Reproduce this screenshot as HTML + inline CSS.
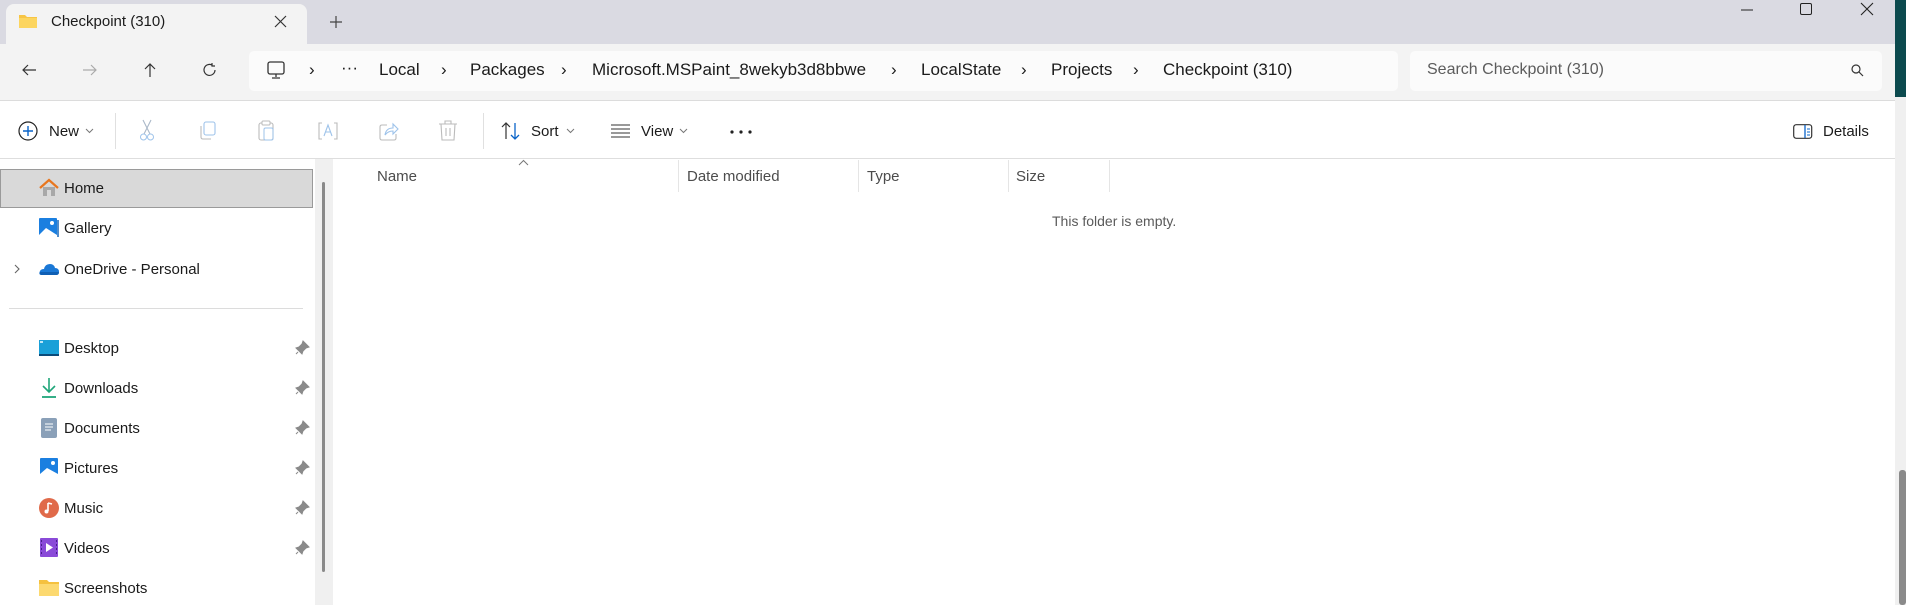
<!DOCTYPE html>
<html><head><meta charset="utf-8"><style>
*{margin:0;padding:0;box-sizing:border-box}
body{width:1906px;height:605px;overflow:hidden;position:relative;background:#fff;font-family:"Liberation Sans",sans-serif;color:#1b1b1b}
.a{position:absolute;white-space:nowrap}
svg{position:absolute;overflow:visible}
.t{font-size:15px}
</style></head><body>
<!-- title bar -->
<div class="a" style="left:0;top:0;width:1895px;height:44px;background:#dadae2"></div>
<div class="a" style="left:6px;top:4px;width:301px;height:41px;background:#f3f3f3;border-radius:8px 8px 0 0"></div>
<svg style="left:19px;top:14px" width="18" height="14"><path d="M0 1h6l2 2h10v11H0z" fill="#f7c545"/><path d="M0 4h18v10H0z" fill="#fcd55f"/></svg>
<div class="a" style="left:51px;top:13px;font-size:15px">Checkpoint (310)</div>
<svg style="left:275px;top:16px" width="11" height="11"><path d="M0 0L11 11M11 0L0 11" stroke="#333" stroke-width="1.2"/></svg>
<svg style="left:330px;top:16px" width="12" height="12"><path d="M6 0V12M0 6H12" stroke="#444" stroke-width="1.2"/></svg>
<svg style="left:1741px;top:9px" width="12" height="2"><path d="M0 1H12" stroke="#222" stroke-width="1"/></svg>
<svg style="left:1800px;top:3px" width="12" height="12"><rect x=".5" y=".5" width="11" height="11" rx="1.5" fill="none" stroke="#222"/></svg>
<svg style="left:1861px;top:3px" width="12" height="12"><path d="M0 0L12 12M12 0L0 12" stroke="#222" stroke-width="1.1"/></svg>
<div class="a" style="left:1895px;top:0;width:11px;height:97px;background:#0c4a4e"></div>
<div class="a" style="left:1895px;top:97px;width:11px;height:508px;background:#f0f0f0"></div>
<div class="a" style="left:1899px;top:470px;width:7px;height:135px;background:#8a8a8a;border-radius:3px"></div>
<!-- address row -->
<div class="a" style="left:0;top:44px;width:1895px;height:57px;background:#f3f3f3;border-bottom:1px solid #dcdcdc"></div>
<svg style="left:22px;top:64px" width="14" height="12"><path d="M14 6H1M6 1L1 6L6 11" fill="none" stroke="#333" stroke-width="1.2"/></svg>
<svg style="left:83px;top:64px" width="14" height="12"><path d="M0 6H13M8 1L13 6L8 11" fill="none" stroke="#aaa" stroke-width="1.2"/></svg>
<svg style="left:144px;top:63px" width="12" height="14"><path d="M6 14V1M1 6L6 1L11 6" fill="none" stroke="#333" stroke-width="1.2"/></svg>
<svg style="left:203px;top:63px" width="14" height="14"><path d="M12 7A5.5 5.5 0 1 1 9.5 2.3M9 0V3H12" fill="none" stroke="#333" stroke-width="1.2"/></svg>
<div class="a" style="left:249px;top:51px;width:1149px;height:40px;background:#fbfbfb;border-radius:5px"></div>
<div class="a" style="left:1410px;top:51px;width:472px;height:40px;background:#fbfbfb;border-radius:5px"></div>
<svg style="left:267px;top:61px" width="18" height="19"><rect x="1" y="1" width="16" height="12" rx="2" fill="none" stroke="#333" stroke-width="1.3"/><path d="M9 13V16M5 17H13" stroke="#333" stroke-width="1.3"/></svg>
<div class="a" style="top:60px;font-size:17px;left:0;width:0">
<span class="a" style="left:309px">›</span>
<span class="a" style="left:341px;top:-2px">···</span>
<span class="a" style="left:379px">Local</span>
<span class="a" style="left:441px">›</span>
<span class="a" style="left:470px">Packages</span>
<span class="a" style="left:561px">›</span>
<span class="a" style="left:592px">Microsoft.MSPaint_8wekyb3d8bbwe</span>
<span class="a" style="left:891px">›</span>
<span class="a" style="left:921px">LocalState</span>
<span class="a" style="left:1021px">›</span>
<span class="a" style="left:1051px">Projects</span>
<span class="a" style="left:1133px">›</span>
<span class="a" style="left:1163px">Checkpoint (310)</span>
</div>
<div class="a" style="left:1427px;top:61px;font-size:16px;color:#5c5c5c">Search Checkpoint (310)</div>
<svg style="left:1851px;top:64px" width="13" height="13"><circle cx="5" cy="5" r="4" fill="none" stroke="#333" stroke-width="1.2"/><path d="M8 8L12 12" stroke="#333" stroke-width="1.2"/></svg>
<!-- toolbar -->
<div class="a" style="left:0;top:158px;width:1895px;height:1px;background:#dedede"></div>
<svg style="left:18px;top:121px" width="20" height="20"><circle cx="10" cy="10" r="9" fill="none" stroke="#222" stroke-width="1.2"/><path d="M10 5V15M5 10H15" stroke="#0a64c8" stroke-width="1.4"/></svg>
<div class="a t" style="left:49px;top:123px">New</div>
<svg style="left:86px;top:129px" width="7" height="4"><path d="M0 0L3.5 3.5L7 0" fill="none" stroke="#777"/></svg>
<div class="a" style="left:115px;top:113px;width:1px;height:36px;background:#e0e0e0"></div>
<svg style="left:140px;top:120px" width="14" height="22"><path d="M3 0L10 14M11 0L4 14" stroke="#aab8c8" stroke-width="1.1"/><circle cx="3.5" cy="17" r="3" fill="none" stroke="#9ec3ea"/><circle cx="10.5" cy="17" r="3" fill="none" stroke="#9ec3ea"/></svg>
<svg style="left:199px;top:121px" width="18" height="20"><rect x="5" y="1" width="11" height="13" rx="2" fill="none" stroke="#9ec3ea" stroke-width="1.1"/><path d="M2 5V16Q2 18 4 18H12" fill="none" stroke="#bbb" stroke-width="1.1"/></svg>
<svg style="left:258px;top:120px" width="18" height="22"><rect x="1" y="3" width="14" height="17" rx="2" fill="none" stroke="#bbb" stroke-width="1.1"/><rect x="4" y="1" width="8" height="4" rx="1" fill="#fff" stroke="#bbb"/><rect x="6" y="8" width="9" height="12" rx="1.5" fill="none" stroke="#9ec3ea"/></svg>
<svg style="left:318px;top:121px" width="20" height="20"><path d="M4 2H1V18H4M16 2H19V18H16" fill="none" stroke="#bbb" stroke-width="1.1"/><path d="M6 15L10 4L14 15M7.5 11H12.5" fill="none" stroke="#9ec3ea" stroke-width="1.1"/></svg>
<svg style="left:379px;top:121px" width="20" height="20"><path d="M8 4H3Q1 4 1 6V17Q1 19 3 19H15Q17 19 17 17V13" fill="none" stroke="#bbb" stroke-width="1.1"/><path d="M6 14Q7 7 14 7V3L19 8L14 13V10Q9 10 6 14Z" fill="none" stroke="#9ec3ea" stroke-width="1.1"/></svg>
<svg style="left:439px;top:120px" width="18" height="22"><path d="M0 4H18M6 4V1H12V4M2 4L3 20H15L16 4M7 8V16M11 8V16" fill="none" stroke="#bbb" stroke-width="1.1"/></svg>
<div class="a" style="left:483px;top:113px;width:1px;height:36px;background:#e0e0e0"></div>
<svg style="left:501px;top:122px" width="20" height="18"><path d="M5 17V1M1 5L5 1L9 5" fill="none" stroke="#333" stroke-width="1.2"/><path d="M14 1V17M10 13L14 17L18 13" fill="none" stroke="#0a64c8" stroke-width="1.3"/></svg>
<div class="a t" style="left:531px;top:123px">Sort</div>
<svg style="left:567px;top:129px" width="7" height="4"><path d="M0 0L3.5 3.5L7 0" fill="none" stroke="#777"/></svg>
<svg style="left:611px;top:124px" width="19" height="13"><path d="M0 1H19M0 5H19M0 9H19M0 13H19" stroke="#333" stroke-width="1.1"/></svg>
<div class="a t" style="left:641px;top:123px">View</div>
<svg style="left:680px;top:129px" width="7" height="4"><path d="M0 0L3.5 3.5L7 0" fill="none" stroke="#777"/></svg>
<svg style="left:730px;top:130px" width="22" height="4"><circle cx="2" cy="2" r="1.6" fill="#222"/><circle cx="11" cy="2" r="1.6" fill="#222"/><circle cx="20" cy="2" r="1.6" fill="#222"/></svg>
<svg style="left:1793px;top:124px" width="20" height="15"><rect x=".7" y=".7" width="18" height="13.6" rx="2.5" fill="none" stroke="#333" stroke-width="1.2"/><path d="M12 1V14" stroke="#0a64c8" stroke-width="1.3"/><path d="M14 5H17M14 8H17M14 11H17" stroke="#0a64c8"/></svg>
<div class="a t" style="left:1823px;top:123px">Details</div>
<!-- sidebar -->
<div class="a" style="left:315px;top:159px;width:18px;height:446px;background:#f0f0f0"></div>
<div class="a" style="left:322px;top:182px;width:3px;height:390px;background:#8a8a8a;border-radius:2px"></div>
<div class="a" style="left:0;top:169px;width:313px;height:39px;background:#d9d9d9;border:1px solid #9a9a9a"></div>
<svg style="left:39px;top:178px" width="20" height="19"><path d="M4 9V18H16V9" fill="#a8a8a8"/><path d="M8 18V12H12V18" fill="#d9d9d9"/><path d="M1 10L10 2L19 10" fill="none" stroke="#e8761e" stroke-width="2.2"/></svg>
<div class="a t" style="left:64px;top:180px">Home</div>
<svg style="left:39px;top:218px" width="20" height="20"><rect x="0" y="0" width="18" height="19" rx="1" fill="#1b7fe0"/><path d="M0 17L7 10L18 17V19H0Z" fill="#fff"/><circle cx="13" cy="5" r="2" fill="#fff"/><path d="M19 2V19" stroke="#1566b8" stroke-width="1.5"/></svg>
<div class="a t" style="left:64px;top:220px">Gallery</div>
<svg style="left:14px;top:264px" width="6" height="10"><path d="M1 1L5 5L1 9" fill="none" stroke="#666" stroke-width="1.1"/></svg>
<svg style="left:39px;top:262px" width="20" height="14"><path d="M3 13Q-1 13 1 9Q2 7 5 7Q6 2 11 2Q15 2 16 6Q20 6 20 10Q20 13 17 13Z" fill="#1a78d6"/><path d="M3 13H17Q20 13 20 10H1Q0 13 3 13Z" fill="#0f5fb4"/></svg>
<div class="a t" style="left:64px;top:261px">OneDrive - Personal</div>
<div class="a" style="left:9px;top:308px;width:294px;height:1px;background:#dcdcdc"></div>
<svg style="left:39px;top:340px" width="20" height="16"><rect width="20" height="16" fill="#1aa0d8"/><path d="M0 14H20V16H0Z" fill="#0b4b7a"/><rect x="1" y="1" width="3" height="2" fill="#bfe6f7"/></svg>
<div class="a t" style="left:64px;top:340px">Desktop</div>
<svg style="left:41px;top:378px" width="16" height="20"><path d="M8 0V13M2 8L8 14L14 8" fill="none" stroke="#1fa67a" stroke-width="1.6"/><path d="M1 19H15" stroke="#1fa67a" stroke-width="1.8"/></svg>
<div class="a t" style="left:64px;top:380px">Downloads</div>
<svg style="left:41px;top:418px" width="16" height="20"><rect width="16" height="20" rx="2" fill="#8aa0b8"/><path d="M4 6H12M4 9H12M4 12H10" stroke="#fff"/></svg>
<div class="a t" style="left:64px;top:420px">Documents</div>
<svg style="left:40px;top:458px" width="18" height="18"><rect width="18" height="18" rx="1" fill="#1b7fe0"/><path d="M0 16L7 10L18 16V18H0Z" fill="#fff"/><circle cx="13" cy="5" r="2" fill="#fff"/></svg>
<div class="a t" style="left:64px;top:460px">Pictures</div>
<svg style="left:39px;top:498px" width="20" height="20"><circle cx="10" cy="10" r="10" fill="#e06a4a"/><path d="M9 5V13M9 5L13 6" stroke="#fff" stroke-width="1.6"/><circle cx="7.5" cy="13.5" r="2" fill="#fff"/></svg>
<div class="a t" style="left:64px;top:500px">Music</div>
<svg style="left:40px;top:538px" width="18" height="19"><rect width="18" height="19" rx="1" fill="#8a4ad8"/><path d="M6 5L13 9.5L6 14Z" fill="#fff"/><path d="M1.5 2V17M16.5 2V17" stroke="#4a1e8c" stroke-dasharray="2 2"/></svg>
<div class="a t" style="left:64px;top:540px">Videos</div>
<svg style="left:39px;top:580px" width="20" height="16"><path d="M0 0H8L10 2H20V16H0Z" fill="#f5c13e"/><path d="M0 4H20V16H0Z" fill="#fcd970"/></svg>
<div class="a t" style="left:64px;top:580px">Screenshots</div>
<div class="a" style="left:0;top:0;width:0">
<svg style="left:296px;top:341px" width="13" height="13"><path d="M7 0L13 6L10 7L7 10L6 13L0 7L3 6L6 3Z M2 11L0 13" fill="#8a8a8a" stroke="#8a8a8a"/></svg>
<svg style="left:296px;top:381px" width="13" height="13"><path d="M7 0L13 6L10 7L7 10L6 13L0 7L3 6L6 3Z M2 11L0 13" fill="#8a8a8a" stroke="#8a8a8a"/></svg>
<svg style="left:296px;top:421px" width="13" height="13"><path d="M7 0L13 6L10 7L7 10L6 13L0 7L3 6L6 3Z M2 11L0 13" fill="#8a8a8a" stroke="#8a8a8a"/></svg>
<svg style="left:296px;top:461px" width="13" height="13"><path d="M7 0L13 6L10 7L7 10L6 13L0 7L3 6L6 3Z M2 11L0 13" fill="#8a8a8a" stroke="#8a8a8a"/></svg>
<svg style="left:296px;top:501px" width="13" height="13"><path d="M7 0L13 6L10 7L7 10L6 13L0 7L3 6L6 3Z M2 11L0 13" fill="#8a8a8a" stroke="#8a8a8a"/></svg>
<svg style="left:296px;top:541px" width="13" height="13"><path d="M7 0L13 6L10 7L7 10L6 13L0 7L3 6L6 3Z M2 11L0 13" fill="#8a8a8a" stroke="#8a8a8a"/></svg>
</div>
<!-- content -->
<svg style="left:519px;top:160px" width="9" height="5"><path d="M0 5L4.5 0.5L9 5" fill="none" stroke="#777"/></svg>
<div class="a" style="left:678px;top:160px;width:1px;height:32px;background:#e5e5e5"></div>
<div class="a" style="left:858px;top:160px;width:1px;height:32px;background:#e5e5e5"></div>
<div class="a" style="left:1008px;top:160px;width:1px;height:32px;background:#e5e5e5"></div>
<div class="a" style="left:1109px;top:160px;width:1px;height:32px;background:#e5e5e5"></div>
<div class="a" style="top:168px;font-size:15px;color:#4c4c4c;left:0;width:0">
<span class="a" style="left:377px">Name</span>
<span class="a" style="left:687px">Date modified</span>
<span class="a" style="left:867px">Type</span>
<span class="a" style="left:1016px">Size</span>
</div>
<div class="a" style="left:1052px;top:213px;font-size:14px;color:#5a5a5a">This folder is empty.</div>
</body></html>
